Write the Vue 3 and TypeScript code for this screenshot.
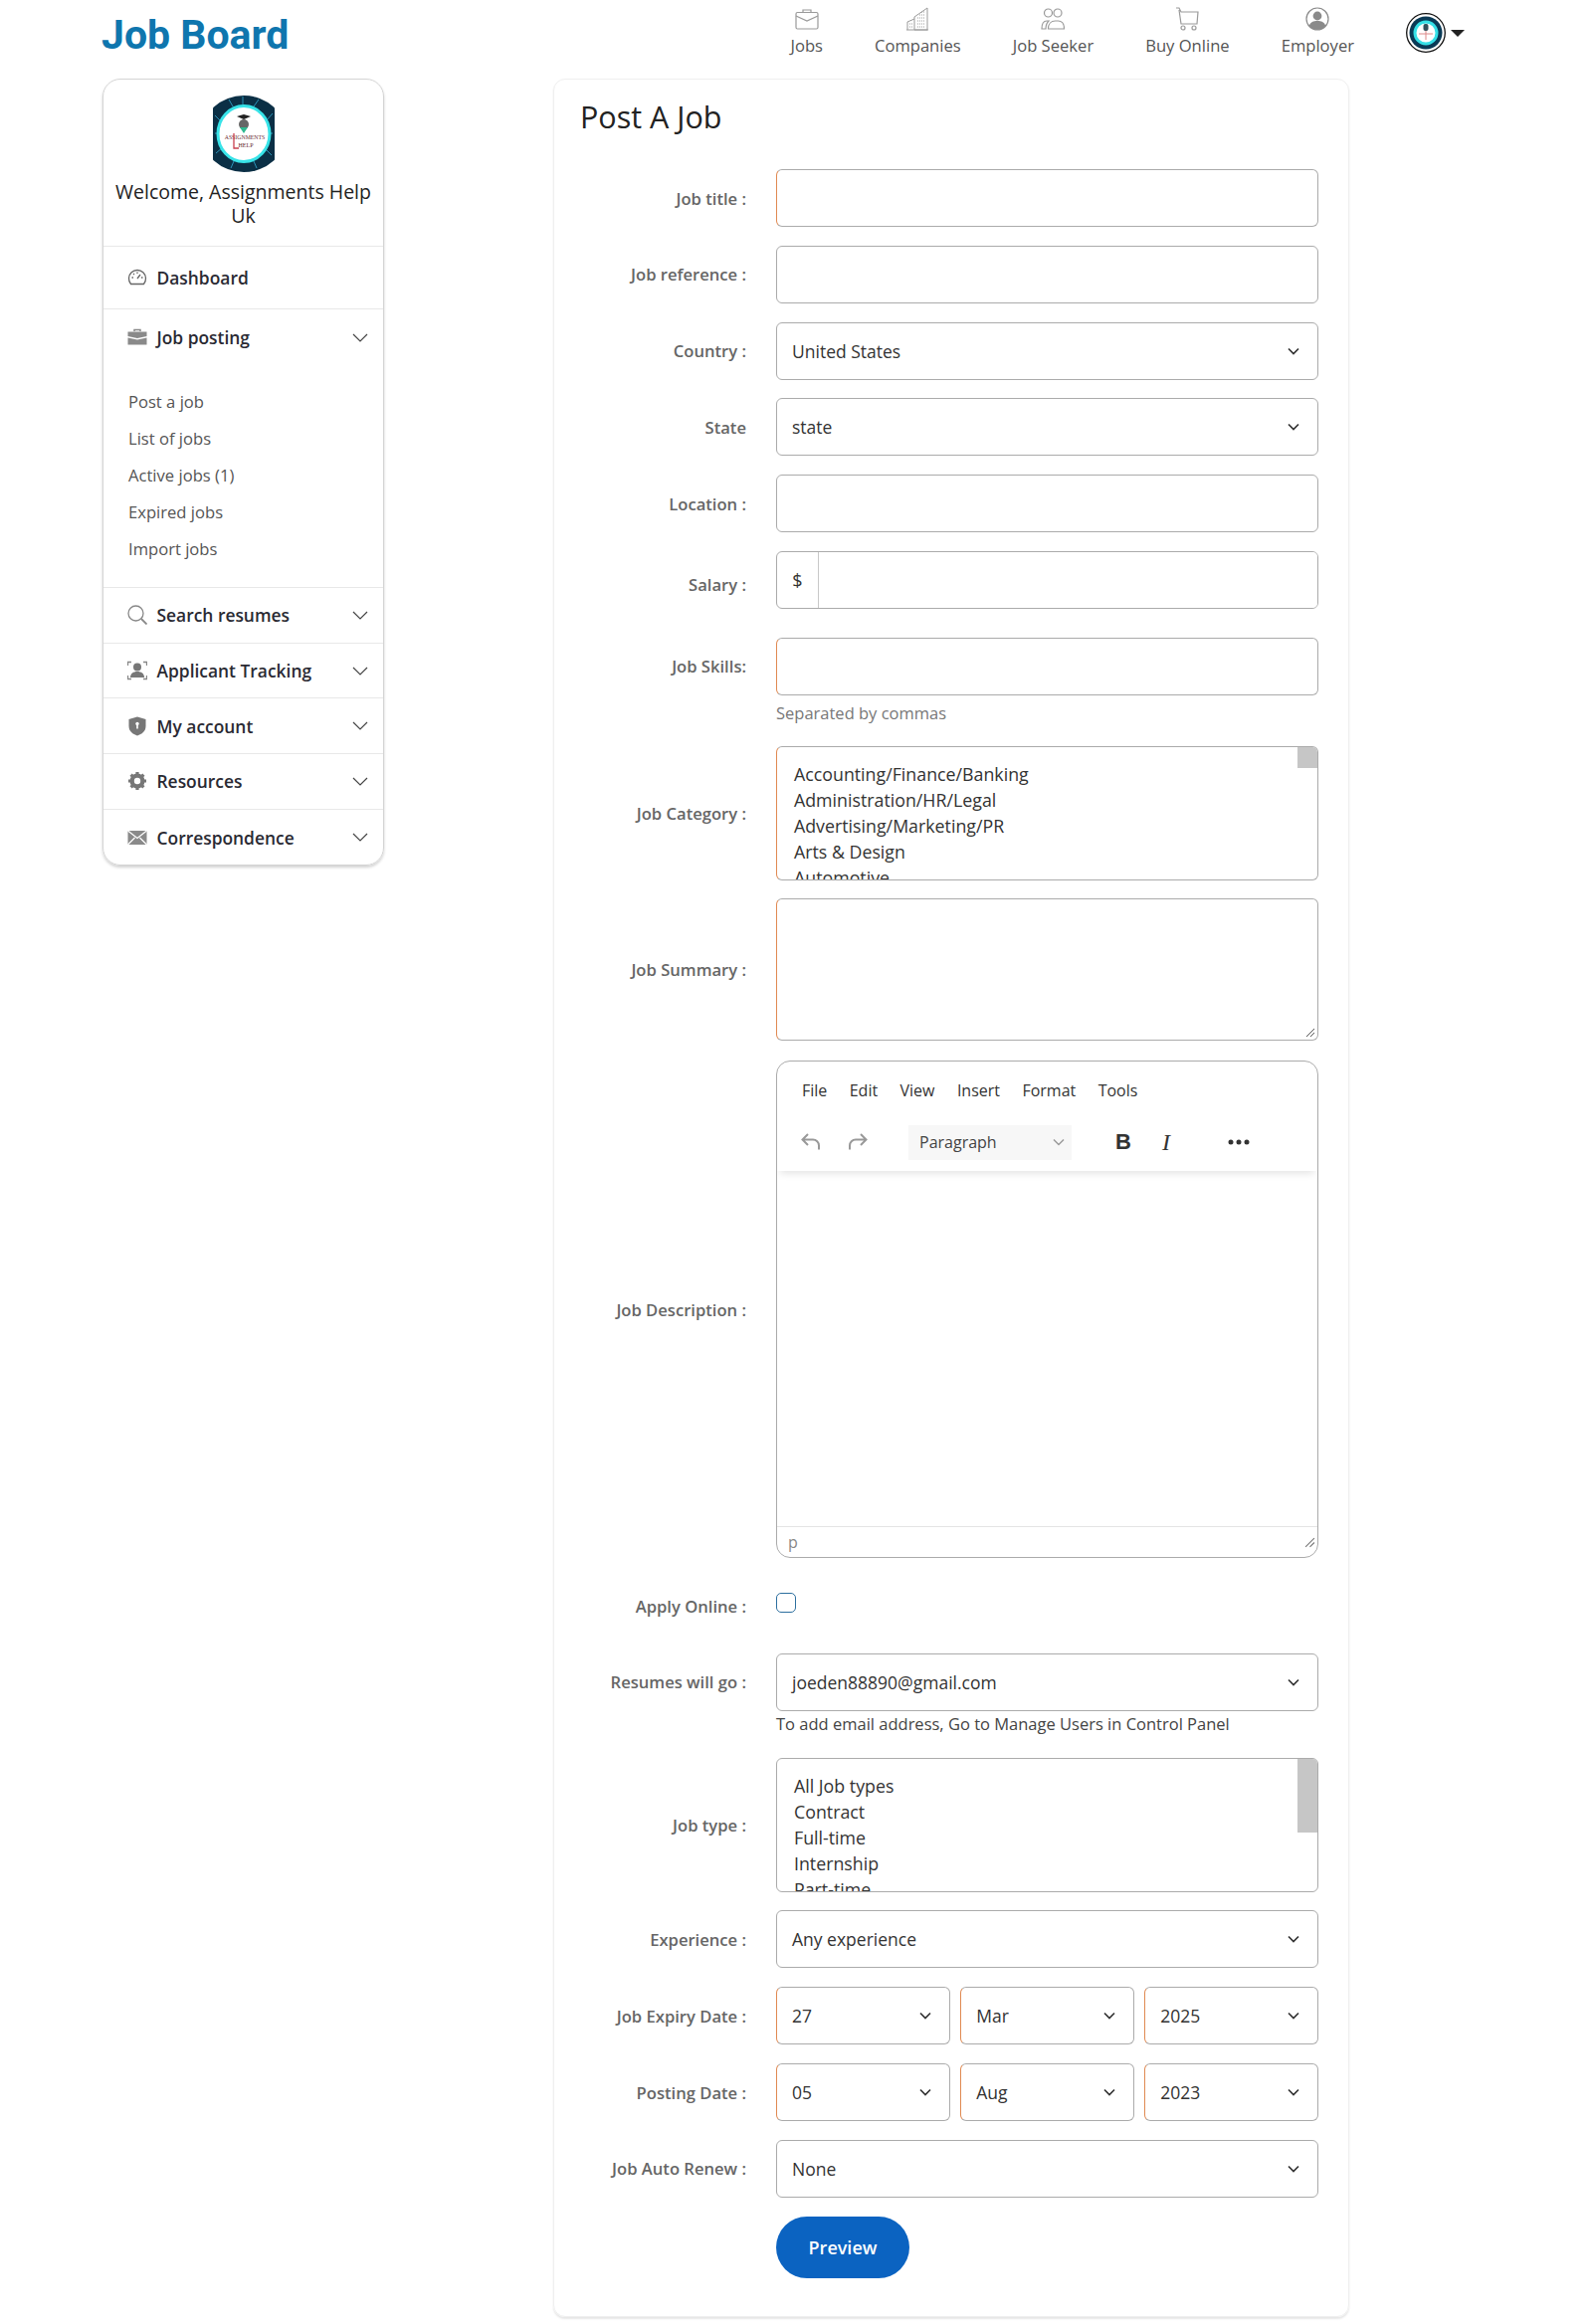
<template>
  <div class="page">
    <header class="topbar">
      <div class="logo">Job Board</div>
      <nav class="topnav">
        <a class="navitem">
          <svg width="24" height="24" viewBox="0 0 24 24" fill="none" stroke="#9a9a9a" stroke-width="1.2"><rect x="1" y="5.500" width="22" height="16.500" rx="1.500" /><path d="M8 5.500V3h8v2.500M1 9l11 5 11-5" /></svg>
          <span>Jobs</span>
        </a>
        <a class="navitem">
          <svg width="24" height="24" viewBox="0 0 24 24" fill="none" stroke="#9a9a9a" stroke-width="1"><path d="M2 23V15l7-3M9 23V10L22 1v22zM1 23h22" /><path d="M4 17h3M4 20h3M12 11h7M12 14h7M12 17h7M12 20h7M14 8h5M16 5h3" stroke-dasharray="1 1" /></svg>
          <span>Companies</span>
        </a>
        <a class="navitem">
          <svg width="24" height="24" viewBox="0 0 24 24" fill="none" stroke="#9a9a9a" stroke-width="1.2"><circle cx="7.500" cy="6" r="4" /><circle cx="17" cy="6" r="4" /><path d="M1 22c0-5 2-8 5-8h2c-2 2-3 5-3 8zM7.500 22c0-5 3-8 7-8h3c4 0 6 3 6 8z" /></svg>
          <span>Job Seeker</span>
        </a>
        <a class="navitem">
          <svg width="24" height="24" viewBox="0 0 24 24" fill="none" stroke="#9a9a9a" stroke-width="1.2"><path d="M1 1h3l2 4h17l-1 12H6L4 3" /><circle cx="8" cy="21" r="2" /><circle cx="19" cy="21" r="2" /></svg>
          <span>Buy Online</span>
        </a>
        <a class="navitem">
          <svg width="24" height="24" viewBox="0 0 24 24"><circle cx="12" cy="12" r="11" fill="#fff" stroke="#8a8a8a" stroke-width="1.2" /><circle cx="12" cy="9" r="4.400" fill="#8a8a8a" /><path d="M3.600 19c1.500-4 4.500-5 8.400-5s6.900 1 8.400 5A11 11 0 0 1 3.600 19z" fill="#8a8a8a" /></svg>
          <span>Employer</span>
        </a>
        <div class="usermenu">
          <svg width="40" height="40" viewBox="0 0 40 40">
            <circle cx="20" cy="20" r="19.300" fill="#fff" stroke="#111" stroke-width="1.300" />
            <circle cx="20" cy="20" r="16.500" fill="#0a3a56" />
            <circle cx="20" cy="20" r="11" fill="#fff" stroke="#35dfe6" stroke-width="3" />
            <rect x="17.500" y="11" width="5" height="7" rx="2" fill="#33505c" />
            <path d="M13 21h14M20 18v9" stroke="#d88" stroke-width="1" />
          </svg>
          <span class="caret"></span>
        </div>
      </nav>
    </header>

    <div class="content">
      <aside class="sidebar">
        <div class="welcome">
          <svg class="avatar" width="62" height="77" viewBox="0 0 62 77">
            <defs><clipPath id="oval"><rect x="0" y="0" width="62" height="77" /></clipPath></defs>
            <g clip-path="url(#oval)">
              <ellipse cx="31" cy="38.500" rx="42" ry="38.500" fill="#0b2f45" />
              <path d="M2 20l6 6M60 18l-7 8M3 58l7-6M59 60l-7-7M16 4l4 7M46 4l-5 7M18 73l3-7M44 73l-3-7M30 1v8M2 38h3M57 38h3" stroke="#2a93b8" stroke-width="1" />
            </g>
            <ellipse cx="31" cy="38.500" rx="26" ry="28" fill="#fff" stroke="#38e3e8" stroke-width="3" />
            <path d="M24 21l7-2 7 2-7 3z" fill="#222" />
            <ellipse cx="31" cy="29" rx="5" ry="5" fill="#666" />
            <path d="M27 32h8l-4 6z" fill="#2fb890" />
            <text x="32" y="43.500" text-anchor="middle" font-size="5.800" fill="#6a2b33" font-family="'Liberation Serif', serif">ASSIGNMENTS</text>
            <text x="33" y="51.500" text-anchor="middle" font-size="6" fill="#6a2b33" font-family="'Liberation Serif', serif">HELP</text>
            <path d="M21 38v15h5" fill="none" stroke="#c9404f" stroke-width="1.300" />
          </svg>
          <div class="welcome-name">Welcome, Assignments Help Uk</div>
        </div>

        <div class="side-row dashboard">
          <svg class="side-icon" width="20" height="20" viewBox="0 0 20 20" fill="none" stroke="#666" stroke-width="1.300"><path d="M3.500 16.500a8.500 8.500 0 1 1 13 0z" /><path d="M10 11l3-4M10 4.500v1.500M4.500 10H6M14 10h1.500M6 6l1 1" /></svg>
          <span class="side-label">Dashboard</span>
        </div>

        <div class="side-group">
          <div class="side-row posting">
            <svg class="side-icon" width="20" height="20" viewBox="0 0 20 20"><path d="M7 4V2.500h6V4" fill="none" stroke="#8a8a8a" stroke-width="1.500" /><path d="M0.500 4.500h19V9l-9.500 2L0.500 9z" fill="#8a8a8a" /><path d="M0.500 10.500l9.500 2 9.500-2V17.500h-19z" fill="#8a8a8a" /></svg>
            <span class="side-label">Job posting</span>
            <svg class="chev" width="16" height="9" viewBox="0 0 16 9" fill="none" stroke="#444" stroke-width="1.200"><path d="M1 1l7 7 7-7" /></svg>
          </div>
          <ul class="sub">
            <li v-for="s in subLinks" :key="s">{{ s }}</li>
          </ul>
        </div>

        <div class="side-row collapsed">
          <svg class="side-icon" width="20" height="20" viewBox="0 0 20 20" fill="none" stroke="#888" stroke-width="1.300"><circle cx="8.500" cy="8.500" r="7.500" /><path d="M14 14l5.500 5.500" stroke-width="1.800" /></svg>
          <span class="side-label">Search resumes</span>
          <svg class="chev" width="16" height="9" viewBox="0 0 16 9" fill="none" stroke="#444" stroke-width="1.200"><path d="M1 1l7 7 7-7" /></svg>
        </div>
        <div class="side-row collapsed">
          <svg class="side-icon" width="20" height="20" viewBox="0 0 20 20"><path d="M.5 5V1.500H4M16 1.500h3.500V5M.5 15v3.500H4M16 18.500h3.500V15" fill="none" stroke="#888" stroke-width="1.300" /><circle cx="10" cy="6.500" r="4" fill="#777" /><path d="M3 17c0-4 3-6 7-6s7 2 7 6z" fill="#777" /></svg>
          <span class="side-label">Applicant Tracking</span>
          <svg class="chev" width="16" height="9" viewBox="0 0 16 9" fill="none" stroke="#444" stroke-width="1.200"><path d="M1 1l7 7 7-7" /></svg>
        </div>
        <div class="side-row collapsed">
          <svg class="side-icon" width="20" height="20" viewBox="0 0 20 20"><path d="M10 .5l8.500 2.500v7c0 5-4 8-8.500 9.500C5.500 18 1.500 15 1.500 10V3z" fill="#777" /><circle cx="10" cy="7.500" r="1.700" fill="#fff" /><rect x="9.200" y="8" width="1.600" height="4.500" fill="#fff" /></svg>
          <span class="side-label">My account</span>
          <svg class="chev" width="16" height="9" viewBox="0 0 16 9" fill="none" stroke="#444" stroke-width="1.200"><path d="M1 1l7 7 7-7" /></svg>
        </div>
        <div class="side-row collapsed">
          <svg class="side-icon" width="20" height="20" viewBox="0 0 20 20"><circle cx="10" cy="10" r="5.500" fill="none" stroke="#777" stroke-width="4" /><path d="M10 1v18M1 10h18M3.600 3.600l12.800 12.800M16.400 3.600L3.600 16.400" stroke="#777" stroke-width="3.200" /><circle cx="10" cy="10" r="3.200" fill="#fff" /></svg>
          <span class="side-label">Resources</span>
          <svg class="chev" width="16" height="9" viewBox="0 0 16 9" fill="none" stroke="#444" stroke-width="1.200"><path d="M1 1l7 7 7-7" /></svg>
        </div>
        <div class="side-row collapsed">
          <svg class="side-icon" width="20" height="20" viewBox="0 0 20 20"><rect x=".5" y="3" width="19" height="14" fill="#8a8a8a" /><path d="M.5 3l9.500 7.500L19.500 3M.5 17l7-7M19.500 17l-7-7" fill="none" stroke="#fff" stroke-width="1.200" /></svg>
          <span class="side-label">Correspondence</span>
          <svg class="chev" width="16" height="9" viewBox="0 0 16 9" fill="none" stroke="#444" stroke-width="1.200"><path d="M1 1l7 7 7-7" /></svg>
        </div>
      </aside>

      <main class="card">
        <h1>Post A Job</h1>

        <div class="row">
          <label>Job title :</label>
          <div class="field"><input class="ctl req" type="text" /></div>
        </div>
        <div class="row">
          <label>Job reference :</label>
          <div class="field"><input class="ctl" type="text" /></div>
        </div>
        <div class="row">
          <label>Country :</label>
          <div class="field"><div class="ctl sel"><span>United States</span><svg class="arrow" width="14" height="8" viewBox="0 0 14 8" fill="none" stroke="#333" stroke-width="1.700"><path d="M2 1.500l5 5 5-5" /></svg></div></div>
        </div>
        <div class="row">
          <label>State</label>
          <div class="field"><div class="ctl sel"><span>state</span><svg class="arrow" width="14" height="8" viewBox="0 0 14 8" fill="none" stroke="#333" stroke-width="1.700"><path d="M2 1.500l5 5 5-5" /></svg></div></div>
        </div>
        <div class="row">
          <label>Location :</label>
          <div class="field"><input class="ctl" type="text" /></div>
        </div>
        <div class="row salary">
          <label>Salary :</label>
          <div class="field">
            <div class="ctl group"><span class="addon">$</span><input type="text" /></div>
          </div>
        </div>
        <div class="row skills">
          <label>Job Skills:</label>
          <div class="field">
            <input class="ctl req" type="text" />
            <div class="hint muted">Separated by commas</div>
          </div>
        </div>
        <div class="row tall">
          <label>Job Category :</label>
          <div class="field">
            <div class="ctl req list">
              <div v-for="c in categories" :key="c" class="opt">{{ c }}</div>
              <div class="thumb short"></div>
            </div>
          </div>
        </div>
        <div class="row summary">
          <label>Job Summary :</label>
          <div class="field">
            <div class="ctl req area">
              <svg class="grip" width="10" height="10" viewBox="0 0 10 10" stroke="#555" stroke-width="1"><path d="M1 9l8-8M5 9l4-4" /></svg>
            </div>
          </div>
        </div>
        <div class="row editor-row">
          <label>Job Description :</label>
          <div class="field">
            <div class="editor">
              <div class="menubar">
                <span v-for="m in menus" :key="m">{{ m }}</span>
              </div>
              <div class="toolbar">
                <svg width="22" height="22" viewBox="0 0 22 22" fill="none" stroke="#999" stroke-width="2"><path d="M8 3L2.500 8.500 8 14M2.500 8.500H13a6 6 0 0 1 6 6v4" /></svg>
                <svg class="redo" width="22" height="22" viewBox="0 0 22 22" fill="none" stroke="#999" stroke-width="2"><path d="M14 3l5.500 5.500L14 14M19.500 8.500H9a6 6 0 0 0-6 6v4" /></svg>
                <div class="blocks">
                  <span>Paragraph</span>
                  <svg width="12" height="8" viewBox="0 0 12 8" fill="none" stroke="#999" stroke-width="1.400"><path d="M1 1.500l5 5 5-5" /></svg>
                </div>
                <b class="bold">B</b>
                <i class="ital">I</i>
                <svg class="more" width="22" height="6" viewBox="0 0 22 6" fill="#333"><circle cx="3" cy="3" r="2.500" /><circle cx="11" cy="3" r="2.500" /><circle cx="19" cy="3" r="2.500" /></svg>
              </div>
              <div class="edit-body"></div>
              <div class="statusbar">
                <span>p</span>
                <svg width="11" height="11" viewBox="0 0 10 10" stroke="#777" stroke-width="1"><path d="M1 9l8-8M5 9l4-4" /></svg>
              </div>
            </div>
          </div>
        </div>
        <div class="row apply">
          <label>Apply Online :</label>
          <div class="field"><span class="check"></span></div>
        </div>
        <div class="row resumes">
          <label>Resumes will go :</label>
          <div class="field">
            <div class="ctl sel"><span>joeden88890@gmail.com</span><svg class="arrow" width="14" height="8" viewBox="0 0 14 8" fill="none" stroke="#333" stroke-width="1.700"><path d="M2 1.500l5 5 5-5" /></svg></div>
            <div class="hint">To add email address, Go to Manage Users in Control Panel</div>
          </div>
        </div>
        <div class="row tall">
          <label>Job type :</label>
          <div class="field">
            <div class="ctl list">
              <div v-for="t in jobTypes" :key="t" class="opt">{{ t }}</div>
              <div class="thumb long"></div>
            </div>
          </div>
        </div>
        <div class="row">
          <label>Experience :</label>
          <div class="field"><div class="ctl sel"><span>Any experience</span><svg class="arrow" width="14" height="8" viewBox="0 0 14 8" fill="none" stroke="#333" stroke-width="1.700"><path d="M2 1.500l5 5 5-5" /></svg></div></div>
        </div>
        <div v-for="d in dates" :key="d.label" class="row">
          <label>{{ d.label }}</label>
          <div class="field triple">
            <div v-for="v in d.values" :key="v" class="ctl sel req"><span>{{ v }}</span><svg class="arrow" width="14" height="8" viewBox="0 0 14 8" fill="none" stroke="#333" stroke-width="1.700"><path d="M2 1.500l5 5 5-5" /></svg></div>
          </div>
        </div>
        <div class="row">
          <label>Job Auto Renew :</label>
          <div class="field"><div class="ctl sel"><span>None</span><svg class="arrow" width="14" height="8" viewBox="0 0 14 8" fill="none" stroke="#333" stroke-width="1.700"><path d="M2 1.500l5 5 5-5" /></svg></div></div>
        </div>
        <div class="row actions">
          <label></label>
          <div class="field"><button type="button" class="preview">Preview</button></div>
        </div>
      </main>
    </div>
  </div>
</template>

<script setup lang="ts">
const subLinks: string[] = ["Post a job", "List of jobs", "Active jobs (1)", "Expired jobs", "Import jobs"];
const menus: string[] = ["File", "Edit", "View", "Insert", "Format", "Tools"];
const categories: string[] = [
  "Accounting/Finance/Banking",
  "Administration/HR/Legal",
  "Advertising/Marketing/PR",
  "Arts & Design",
  "Automotive",
];
const jobTypes: string[] = ["All Job types", "Contract", "Full-time", "Internship", "Part-time"];
const dates = [
  { label: "Job Expiry Date :", values: ["27", "Mar", "2025"] },
  { label: "Posting Date :", values: ["05", "Aug", "2023"] },
];
</script>

<style>
body {
  background: #fff;
}
</style>

<style scoped>
.page {
  width: 1600px;
  height: 2336px;
  overflow: hidden;
  font-family: "Open Sans", "Noto Sans", sans-serif;
  font-size: 16px;
  color: #333;
  background: #fff;
}
.topbar {
  height: 79px;
  display: flex;
  justify-content: space-between;
  padding-left: 102px;
  padding-right: 128px;
  box-sizing: border-box;
}
.logo {
  font-family: Roboto, sans-serif;
  font-weight: 700;
  font-size: 41px;
  line-height: 46px;
  height: 46px;
  margin-top: 12px;
  color: #0f76ae;
}
.topnav {
  display: flex;
  gap: 52px;
}
.navitem {
  display: flex;
  flex-direction: column;
  align-items: center;
  padding-top: 7px;
  color: #555;
  font-size: 16.600px;
  line-height: 20px;
}
.navitem span {
  margin-top: 5px;
}
.usermenu {
  display: flex;
  align-items: center;
  height: 40px;
  margin-top: 13px;
  gap: 5px;
}
.caret {
  border-top: 7px solid #222;
  border-left: 7px solid transparent;
  border-right: 7px solid transparent;
}
.content {
  display: flex;
  align-items: flex-start;
}
.sidebar {
  width: 283px;
  height: 791px;
  margin-left: 103px;
  box-sizing: border-box;
  border: 1px solid #d4d4d4;
  border-radius: 18px;
  box-shadow: 0 2px 3px rgba(0, 0, 0, 0.18);
}
.welcome {
  height: 168px;
  border-bottom: 1px solid #e8e8e8;
  text-align: center;
  padding-top: 16px;
  box-sizing: border-box;
}
.avatar {
  display: block;
  margin: 0 auto;
}
.welcome-name {
  font-size: 19.500px;
  font-weight: 500;
  line-height: 24px;
  color: #222;
  margin-top: 8px;
  padding: 0 8px;
}
.side-row {
  display: flex;
  align-items: center;
  padding: 0 15px 0 24px;
  box-sizing: border-box;
  position: relative;
}
.side-icon {
  flex: none;
  margin-right: 9.500px;
}
.side-label {
  flex: 1;
  font-size: 17.400px;
  font-weight: 600;
  color: #2a2a33;
}
.chev {
  flex: none;
}
.dashboard {
  height: 63px;
  border-bottom: 1px solid #e8e8e8;
}
.posting {
  height: 56px;
}
.side-group {
  height: 280px;
  border-bottom: 1px solid #e8e8e8;
  box-sizing: border-box;
}
.sub {
  list-style: none;
  margin: 0;
  padding: 18px 0 0 25px;
}
.sub li {
  height: 37px;
  line-height: 37px;
  font-size: 16.600px;
  color: #555;
}
.collapsed {
  height: 55.700px;
  border-bottom: 1px solid #e8e8e8;
}
.collapsed:last-child {
  border-bottom: none;
}
.card {
  width: 800px;
  height: 2250px;
  margin-left: 170px;
  box-sizing: border-box;
  border: 1px solid #efefef;
  border-radius: 12px;
  box-shadow: 0 2px 2px rgba(0, 0, 0, 0.1);
  padding: 0 30px 0 0;
}
h1 {
  margin: 18px 0 34px 26px;
  height: 38px;
  font-size: 30.500px;
  line-height: 38px;
  font-weight: 500;
  color: #222;
}
.row {
  display: flex;
  align-items: center;
  margin-bottom: 18.800px;
}
.row > label {
  width: 193px;
  flex: none;
  text-align: right;
  font-size: 16.600px;
  font-weight: 600;
  color: #666;
  margin-right: 30px;
}
.field {
  flex: 1;
  min-width: 0;
}
.ctl {
  display: block;
  width: 100%;
  height: 58px;
  box-sizing: border-box;
  border: 1.500px solid #ababab;
  border-radius: 6px;
  background: #fff;
  outline: none;
  font: inherit;
}
.req {
  border-left-color: #e08a52;
}
.sel {
  display: flex;
  align-items: center;
  justify-content: space-between;
  padding: 0 17px 0 15px;
  font-size: 17.500px;
  color: #333;
}
.group {
  display: flex;
  overflow: hidden;
}
.group input {
  flex: 1;
  border: none;
  outline: none;
  min-width: 0;
}
.addon {
  width: 41px;
  flex: none;
  border-right: 1px solid #c8c8c8;
  text-align: center;
  line-height: 56px;
  font-size: 18px;
  color: #333;
}
.salary {
  margin-bottom: 29px;
}
.salary > label {
  padding-top: 10px;
}
.skills {
  align-items: flex-start;
  margin-bottom: 23px;
}
.skills > label {
  line-height: 58px;
}
.hint {
  font-size: 16.500px;
  line-height: 20px;
  margin-top: 8px;
  color: #444;
}
.hint.muted {
  color: #777;
}
.list {
  height: 135px;
  position: relative;
  overflow: hidden;
  padding: 14px 0 0 17px;
  font-size: 17.800px;
  color: #333;
}
.opt {
  height: 26px;
  line-height: 26px;
}
.thumb {
  position: absolute;
  right: 0;
  top: 0;
  width: 20px;
  background: #c6c6c6;
}
.thumb.short {
  height: 21px;
}
.thumb.long {
  height: 74px;
}
.area {
  height: 143px;
  position: relative;
}
.grip {
  position: absolute;
  right: 2px;
  bottom: 2px;
}
.summary {
  margin-bottom: 20px;
}
.editor {
  height: 500px;
  box-sizing: border-box;
  border: 1.500px solid #ababab;
  border-radius: 14px;
  display: flex;
  flex-direction: column;
  overflow: hidden;
}
.menubar {
  height: 46px;
  display: flex;
  align-items: flex-end;
  padding: 0 0 6px 25px;
  gap: 22.400px;
  font-size: 16px;
  color: #333;
  box-sizing: border-box;
}
.toolbar {
  height: 64px;
  display: flex;
  align-items: center;
  padding-left: 23px;
  padding-top: 6px;
  box-shadow: 0 5px 8px -3px rgba(0, 0, 0, 0.12);
  position: relative;
  box-sizing: border-box;
}
.redo {
  margin-left: 25px;
}
.blocks {
  width: 164px;
  height: 35px;
  box-sizing: border-box;
  margin-left: 40px;
  background: #f7f7f7;
  display: flex;
  align-items: center;
  justify-content: space-between;
  padding: 0 7px 0 11px;
  font-size: 16px;
  color: #444;
}
.bold {
  margin-left: 44px;
  font-size: 22px;
  font-family: "Liberation Sans", sans-serif;
  color: #333;
  width: 17px;
}
.ital {
  margin-left: 30px;
  font-size: 24px;
  font-family: "Liberation Serif", serif;
  color: #333;
  width: 12px;
}
.more {
  margin-left: 54px;
}
.edit-body {
  flex: 1;
}
.statusbar {
  height: 31px;
  flex: none;
  border-top: 1px solid #e4e4e4;
  box-sizing: border-box;
  display: flex;
  align-items: center;
  justify-content: space-between;
  padding: 0 2px 0 11px;
  color: #888;
  font-size: 16px;
}
.editor-row {
  margin-bottom: 26.500px;
}
.apply {
  margin-bottom: 29px;
  height: 40px;
  align-items: flex-start;
}
.apply > label {
  line-height: 44px;
}
.check {
  display: block;
  width: 20px;
  height: 20px;
  margin-top: 8px;
  box-sizing: border-box;
  border: 1.500px solid #2d6f9f;
  border-radius: 5px;
}
.resumes {
  align-items: flex-start;
  margin-bottom: 23.500px;
}
.resumes > label {
  line-height: 58px;
}
.resumes .hint {
  margin-top: 3.500px;
}
.tall {
  margin-bottom: 18.500px;
}
.triple {
  display: flex;
  gap: 10.500px;
}
.actions {
  margin-bottom: 0;
}
.preview {
  width: 134px;
  height: 62px;
  border: none;
  border-radius: 31px;
  background: #0b63c1;
  color: #fff;
  font: inherit;
  font-size: 18px;
  font-weight: 600;
}
</style>
